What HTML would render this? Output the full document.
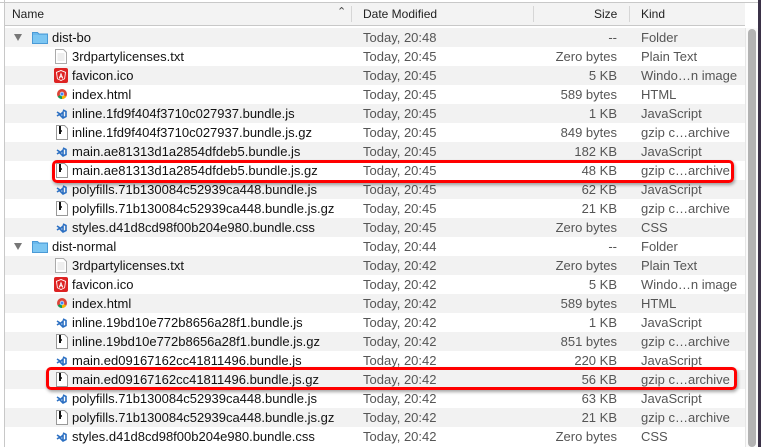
<!DOCTYPE html>
<html><head><meta charset="utf-8"><style>
*{margin:0;padding:0;box-sizing:border-box}
body{width:761px;height:447px;overflow:hidden;background:#fff;font-family:"Liberation Sans",sans-serif;font-size:13px;position:relative}
.hdr{position:absolute;left:5px;top:3px;width:740px;height:23px;background:#f3f3f3;border-bottom:1px solid #c8c8c8}
.hdr span{position:absolute;top:4px;color:#222;font-size:12px}
.sep{position:absolute;top:3px;width:1px;height:16px;background:#d6d6d6}
.row{position:absolute;left:5px;width:740px;height:19px}
.row.g{background:#f2f2f2}
.n{position:absolute;top:2px;color:#111;white-space:nowrap}
.d{position:absolute;left:358px;top:2px;color:#555}
.s{position:absolute;right:128px;top:2px;color:#555;text-align:right}
.k{position:absolute;left:636px;top:2px;color:#555}
.ic{position:absolute;top:2px}
.box{position:absolute;border:3px solid #f00;border-radius:5px;box-shadow:1px 2px 3px rgba(0,0,0,.35)}
</style></head><body>
<div style="position:absolute;left:0;top:0;width:761px;height:3px;background:#fff;border-bottom:1px solid #c8c8c8"></div>
<div style="position:absolute;left:4px;top:0;width:1px;height:447px;background:#c8c8c8"></div>
<div class="hdr">
<span style="left:7px">Name</span>
<span style="left:332px;top:2px;font-size:11px;color:#444">&#8963;</span>
<div class="sep" style="left:346px"></div>
<span style="left:358px">Date Modified</span>
<div class="sep" style="left:528px"></div>
<span style="left:589px">Size</span>
<div class="sep" style="left:624px"></div>
<span style="left:636px">Kind</span>
</div>
<div style="position:absolute;left:745px;top:28px;width:13px;height:419px;background:#fafafa;border-left:1px solid #e6e6e6"></div>
<div style="position:absolute;left:748px;top:29px;width:8px;height:418px;background:#b3b3b3;border-radius:4px"></div>
<div style="position:absolute;left:758px;top:0;width:3px;height:447px;background:#3b3248"></div>
<div id="rows"></div>
<script>
var F='<svg class="ic" style="left:27px;top:3px" width="16" height="13"><path d="M0.5 1.5h5l1.5 1.5h8.5v9.5h-15z" fill="#6cb9ec" stroke="#4a9ad6"/><rect x="1" y="4" width="14" height="8" fill="#7cc6f2"/></svg><svg class="ic" style="left:9px;top:6px" width="9" height="8"><path d="M0 0h8l-4 7z" fill="#777"/></svg>';
var T='<svg class="ic" style="left:50px" width="12" height="15"><path d="M0.5 0.5h8l3 3v11h-11z" fill="#fff" stroke="#aaa"/><path d="M2.5 5h7M2.5 7h7M2.5 9h7M2.5 11h7" stroke="#ddd"/></svg>';
var A='<svg class="ic" style="left:49px;top:2px" width="14" height="15"><rect x="0" y="0" width="14" height="15" rx="2" fill="#d22"/><path d="M7 2l5 2-1 7-4 2-4-2-1-7z" fill="#fff"/><path d="M7 3l4 1.6-.8 6L7 12l-3.2-1.4-.8-6z" fill="#d22"/><path d="M7 4.5l-2.3 6h1.2l.5-1.3h1.2l.5 1.3h1.2zM6.6 8.2l.4-1.3.4 1.3z" fill="#fff"/></svg>';
var C='<svg class="ic" style="left:52px;top:4px" width="10" height="10"><circle cx="5" cy="5" r="5" fill="#db4437"/><path d="M5 5L0.7 7.5A5 5 0 0 0 5 10z" fill="#0f9d58"/><path d="M5 5v5A5 5 0 0 0 9.3 7.5z" fill="#f4b400"/><circle cx="5" cy="5" r="2.2" fill="#fff"/><circle cx="5" cy="5" r="1.6" fill="#4285f4"/></svg>';
var J='<svg class="ic" style="left:51px;top:5px" width="11" height="10"><path d="M1 3l3 2-3 2M5 5h0M7 1l3 1.5v5L7 9l-3-3 3-3v5" fill="none" stroke="#2b6fc2" stroke-width="1.6"/></svg>';
var G='<svg class="ic" style="left:51px" width="12" height="15"><path d="M0.5 0.5h8l3 3v11h-11z" fill="#fff" stroke="#999"/><path d="M4 1v8" stroke="#111" stroke-width="2"/><path d="M4 6h2" stroke="#111" stroke-width="1.5"/></svg>';
var data=[
['F','dist-bo','Today, 20:48','--','Folder'],
['T','3rdpartylicenses.txt','Today, 20:45','Zero bytes','Plain Text'],
['A','favicon.ico','Today, 20:45','5 KB','Windo\u2026n image'],
['C','index.html','Today, 20:45','589 bytes','HTML'],
['J','inline.1fd9f404f3710c027937.bundle.js','Today, 20:45','1 KB','JavaScript'],
['G','inline.1fd9f404f3710c027937.bundle.js.gz','Today, 20:45','849 bytes','gzip c\u2026archive'],
['J','main.ae81313d1a2854dfdeb5.bundle.js','Today, 20:45','182 KB','JavaScript'],
['G','main.ae81313d1a2854dfdeb5.bundle.js.gz','Today, 20:45','48 KB','gzip c\u2026archive'],
['J','polyfills.71b130084c52939ca448.bundle.js','Today, 20:45','62 KB','JavaScript'],
['G','polyfills.71b130084c52939ca448.bundle.js.gz','Today, 20:45','21 KB','gzip c\u2026archive'],
['J','styles.d41d8cd98f00b204e980.bundle.css','Today, 20:45','Zero bytes','CSS'],
['F','dist-normal','Today, 20:44','--','Folder'],
['T','3rdpartylicenses.txt','Today, 20:42','Zero bytes','Plain Text'],
['A','favicon.ico','Today, 20:42','5 KB','Windo\u2026n image'],
['C','index.html','Today, 20:42','589 bytes','HTML'],
['J','inline.19bd10e772b8656a28f1.bundle.js','Today, 20:42','1 KB','JavaScript'],
['G','inline.19bd10e772b8656a28f1.bundle.js.gz','Today, 20:42','851 bytes','gzip c\u2026archive'],
['J','main.ed09167162cc41811496.bundle.js','Today, 20:42','220 KB','JavaScript'],
['G','main.ed09167162cc41811496.bundle.js.gz','Today, 20:42','56 KB','gzip c\u2026archive'],
['J','polyfills.71b130084c52939ca448.bundle.js','Today, 20:42','63 KB','JavaScript'],
['G','polyfills.71b130084c52939ca448.bundle.js.gz','Today, 20:42','21 KB','gzip c\u2026archive'],
['J','styles.d41d8cd98f00b204e980.bundle.css','Today, 20:42','Zero bytes','CSS']];
var icons={F:F,T:T,A:A,C:C,J:J,G:G};var h='';
data.forEach(function(r,i){var nl=r[0]=='F'?47:67;
h+='<div class="row'+(i%2==0?' g':'')+'" style="top:'+(28+19*i)+'px">'+icons[r[0]]+'<span class="n" style="left:'+nl+'px">'+r[1]+'</span><span class="d">'+r[2]+'</span><span class="s">'+r[3]+'</span><span class="k">'+r[4]+'</span></div>';});
document.getElementById('rows').innerHTML=h;
</script>
<div class="box" style="left:52px;top:160px;width:682px;height:23px"></div>
<div class="box" style="left:46px;top:367px;width:691px;height:23px"></div>
</body></html>
